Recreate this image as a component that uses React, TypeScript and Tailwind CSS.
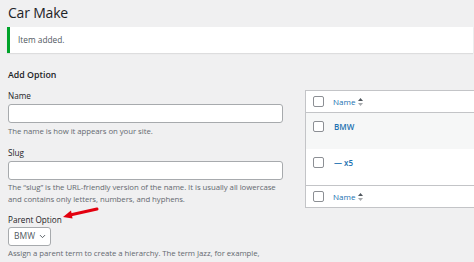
import { ChevronDown } from 'lucide-react';

function SortIcon() {
  return (
    <svg width="5" height="8" viewBox="0 0 5 8" className="ml-[3px]">
      <path d="M2.5 0 L5 3 H0 Z" fill="#50575e" />
      <path d="M2.5 8 L5 5 H0 Z" fill="#a7aaad" />
    </svg>
  );
}

function Check() {
  return <div className="w-[11px] h-[11px] rounded-[2px] border border-[#8c8f94] bg-white shrink-0" />;
}

export default function App() {
  return (
    <div className="w-[474px] h-[262px] overflow-hidden bg-[#f0f0f1] text-[#3c434a] font-['Open_Sans',sans-serif] relative">
      {/* Title */}
      <h1 className="pl-[8px] pt-[3px] h-[27px] text-[14px] leading-[20px] tracking-[-0.2px] text-[#1d2327]">Car Make</h1>

      {/* Notice */}
      <div className="ml-[7px] mr-[1px] h-[26px] bg-white border-l-[3px] border-[#00a32a] shadow-[0_1px_1px_rgba(0,0,0,0.08)] flex items-center pl-[8px] text-[8.3px] text-[#50575e]">
        Item added.
      </div>

      <div className="flex gap-[22px] pl-[8px]">
        {/* Left form */}
        <div className="w-[275px] shrink-0">
          <h2 className="mt-[15px] h-[14px] text-[8.8px] leading-[14px] font-semibold text-[#1d2327]">Add Option</h2>

          <div className="mt-[8px] h-[12px] text-[8.2px] leading-[12px] text-[#1d2327]">Name</div>
          <div className="mt-[2px] h-[19px] bg-white border border-[#a7aaad] rounded-[3px]" />
          <p className="mt-[2px] h-[12px] text-[7.8px] leading-[12px] tracking-[-0.05px] text-[#646970]">The name is how it appears on your site.</p>

          <div className="mt-[10px] h-[12px] text-[8.2px] leading-[12px] text-[#1d2327]">Slug</div>
          <div className="mt-[2px] h-[19px] bg-white border border-[#a7aaad] rounded-[3px]" />
          <p className="mt-[2px] text-[7.8px] leading-[11.5px] tracking-[-0.05px] text-[#646970]">
            The “slug” is the URL-friendly version of the name. It is usually all lowercase and contains only letters, numbers, and hyphens.
          </p>

          <div className="mt-[9px] h-[12px] text-[8.2px] leading-[12px] text-[#1d2327]">Parent Option</div>
          <div className="mt-[1px] w-[43px] h-[19px] bg-white border border-[#a7aaad] rounded-[3px] flex items-center pl-[5px] gap-[3px] text-[8.5px] text-[#50575e]">
            BMW
            <ChevronDown size={9} strokeWidth={2.5} color="#50575e" />
          </div>
          <p className="mt-[2px] text-[7.8px] leading-[11px] tracking-[-0.05px] text-[#646970]">
            Assign a parent term to create a hierarchy. The term Jazz, for example, would be the parent of Bebop and Big Band.
          </p>
        </div>

        {/* Right table */}
        <div className="mt-[37px] w-[200px] shrink-0 self-start border border-[#c3c4c7] bg-white text-[8px]">
          <div className="h-[22px] flex items-center pl-[7px] gap-[9px] border-b border-[#c3c4c7]">
            <Check />
            <span className="flex items-center text-[#2271b1]">Name<SortIcon /></span>
          </div>
          <div className="h-[36px] bg-[#f6f7f7] flex items-start pt-[8px] pl-[7px] gap-[10px]">
            <Check />
            <span className="font-semibold text-[#2271b1] leading-[11px]">BMW</span>
          </div>
          <div className="h-[36px] bg-white flex items-start pt-[8px] pl-[7px] gap-[10px]">
            <Check />
            <span className="font-semibold text-[#2271b1] leading-[11px]">— x5</span>
          </div>
          <div className="h-[22px] flex items-center pl-[7px] gap-[9px] border-t border-[#c3c4c7]">
            <Check />
            <span className="flex items-center text-[#2271b1]">Name<SortIcon /></span>
          </div>
        </div>
      </div>

      {/* Red arrow annotation */}
      <svg className="absolute left-[60px] top-[205px]" width="42" height="16" viewBox="0 0 42 16">
        <path d="M37 4 L10 10" stroke="#e3000f" strokeWidth="3" strokeLinecap="round" />
        <path d="M3 12 L11 5.5 L12.5 13.5 Z" fill="#e3000f" />
      </svg>
    </div>
  );
}
